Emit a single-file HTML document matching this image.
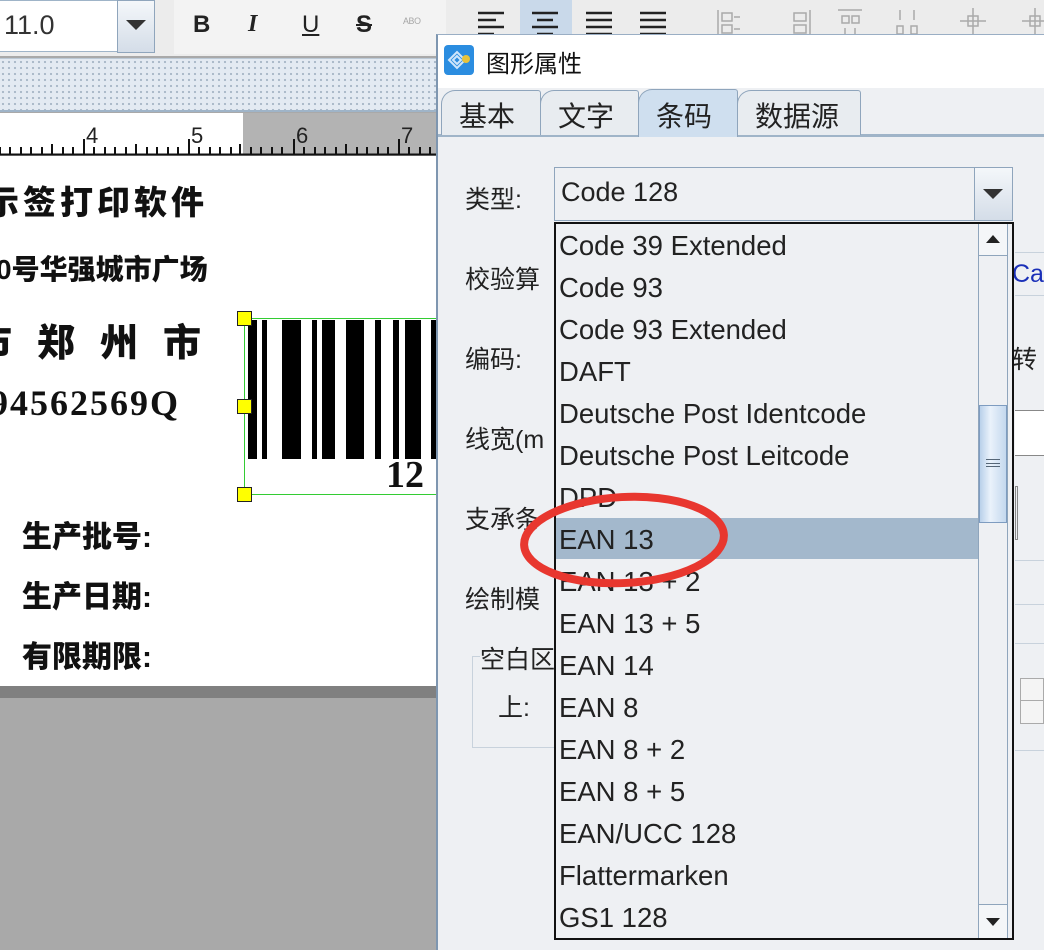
<!DOCTYPE html>
<html><head><meta charset="utf-8"><style>
*{margin:0;padding:0;box-sizing:border-box}
body{width:1044px;height:950px;overflow:hidden;position:relative;background:#a9a9a9;font-family:"Liberation Sans","Noto Sans CJK SC",sans-serif}
.a{position:absolute}
.cj{font-family:"Liberation Sans","Noto Sans CJK SC",sans-serif}
.item{position:absolute;left:559px;font-size:27.5px;color:#222;white-space:nowrap;line-height:42px;height:42px}
.lbl{position:absolute;left:465px;font-size:25px;color:#222}
</style></head><body>
<!-- toolbar -->
<div class="a" style="left:0;top:0;width:1044px;height:56px;background:#ececec"></div>
<div class="a" style="left:0;top:0;width:118px;height:52px;background:#fff;border:1px solid #9fb4c8;border-left:none"></div>
<div class="a" style="left:4px;top:10px;font-size:27px;color:#333">11.0</div>
<div class="a" style="left:117px;top:0;width:38px;height:53px;background:linear-gradient(#f4f7fa,#d4dde8);border:1px solid #8fa5bc"></div>
<div class="a" style="left:126px;top:20px;width:0;height:0;border-left:10px solid transparent;border-right:10px solid transparent;border-top:10px solid #333"></div>
<div class="a" style="left:174px;top:0;width:272px;height:54px;background:#f3f3f3"></div>
<div class="a" style="left:193px;top:11px;font-size:24px;font-weight:bold;color:#222">B</div>
<div class="a" style="left:248px;top:11px;font-size:24px;font-style:italic;font-weight:bold;font-family:'Liberation Serif',serif;color:#222">I</div>
<div class="a" style="left:302px;top:11px;font-size:24px;text-decoration:underline;color:#222">U</div>
<div class="a" style="left:356px;top:11px;font-size:24px;text-decoration:line-through;font-weight:bold;color:#222">S</div>
<div class="a" style="left:403px;top:15px;font-size:13px;color:#aaa">ᴬᴮᴼ</div>
<div class="a" style="left:520px;top:0;width:52px;height:40px;background:#c9d9ea"></div>
<svg class="a" style="left:470px;top:8px" width="200" height="30"><g stroke="#222" stroke-width="2.5">
<path d="M8 5h26M8 12h18M8 19h26M8 26h16"/><path d="M62 5h26M67 12h16M62 19h26M67 26h16"/><path d="M116 5h26M116 12h26M116 19h26M116 26h26"/><path d="M170 5h26M170 12h26M170 19h26M170 26h26"/></g></svg>
<svg class="a" style="left:710px;top:8px" width="334" height="30"><g stroke="#aaa" stroke-width="1.5" fill="none">
<path d="M8 2v26M12 5h10v8H12zM12 17h10v8H12zM30 9h-6M30 21h-6"/><path d="M100 2v26M84 5h12v8H84zM84 17h12v8H84z"/><path d="M128 2h24M132 8h7v7h-7zM142 8h7v7h-7zM135 20v8M145 20v8"/><path d="M190 2v10M204 2v10M187 18h6v8h-6zM201 18h6v8h-6z"/><path d="M258 8h10v10h-10zM263 0v28M250 13h26"/><path d="M320 8h10v10h-10zM312 13h26M325 0v28"/></g></svg>
<!-- dotted strip -->
<div class="a" style="left:0;top:58px;width:440px;height:54px;background-color:#e3eaf2;background-image:radial-gradient(#a9b8c8 1px,transparent 1.3px);background-size:6px 6px;border-top:1px solid #bcc9d6;border-bottom:2px solid #9fb4c8"></div>
<!-- ruler -->
<div class="a" style="left:0;top:113px;width:243px;height:42px;background:#fff"></div>
<div class="a" style="left:243px;top:113px;width:197px;height:42px;background:#b3b3b3"></div>
<svg class="a" style="left:0;top:113px" width="440" height="43">
<path d="M0 41.5H440" stroke="#111" stroke-width="2"/>
<g stroke="#111" stroke-width="2">
<path d="M0 41v-7M10 41v-7M21 41v-7M31 41v-7M42 41v-7M52 41v-10M63 41v-7M73 41v-7M84 41v-15M94 41v-7M105 41v-7M115 41v-7M126 41v-7M136 41v-10M147 41v-7M157 41v-7M168 41v-7M178 41v-7M189 41v-15M199 41v-7M210 41v-7M220 41v-7M231 41v-7M240 41v-10M251 41v-7M261 41v-7M272 41v-7M282 41v-7M294 41v-15M304 41v-7M315 41v-7M325 41v-7M336 41v-7M346 41v-10M357 41v-7M367 41v-7M378 41v-7M388 41v-7M399 41v-15M409 41v-7M420 41v-7M430 41v-7"/></g>
<g font-size="22" fill="#222" font-family="Liberation Sans"><text x="86" y="30">4</text><text x="191" y="30">5</text><text x="296" y="30">6</text><text x="401" y="30">7</text></g></svg>
<!-- canvas -->
<div class="a" style="left:0;top:156px;width:440px;height:530px;background:#fff"></div>
<div class="a" style="left:0;top:686px;width:440px;height:12px;background:#808080"></div>
<div class="a cj" style="left:-14px;top:176px;font-size:33px;font-weight:900;letter-spacing:4px;color:#111">示签打印软件</div>
<div class="a cj" style="left:-4px;top:248px;font-size:28px;font-weight:900;color:#111">0号华强城市广场</div>
<div class="a cj" style="left:-26px;top:312px;font-size:38px;font-weight:900;letter-spacing:25px;color:#111">市郑州市</div>
<div class="a" style="left:-10px;top:382px;font-size:36px;font-weight:bold;letter-spacing:2px;font-family:'Liberation Serif',serif;color:#111">94562569Q</div>
<div class="a cj" style="left:22px;top:508px;font-size:30px;font-weight:900;color:#111;line-height:60px">生产批号:<br>生产日期:<br>有限期限:</div>
<!-- barcode -->
<div class="a" style="left:244px;top:318px;width:200px;height:177px;border:1.5px solid #3c3;border-right:none"></div>
<svg class="a" style="left:245px;top:320px" width="195" height="140"><g fill="#000">
<rect x="3" y="0" width="9" height="139"/><rect x="17" y="0" width="5" height="139"/><rect x="37" y="0" width="19" height="139"/><rect x="67" y="0" width="5" height="139"/><rect x="77" y="0" width="13" height="139"/><rect x="101" y="0" width="18" height="139"/><rect x="130" y="0" width="6" height="139"/><rect x="148" y="0" width="6" height="139"/><rect x="160" y="0" width="16" height="139"/><rect x="186" y="0" width="9" height="139"/></g></svg>
<div class="a" style="left:386px;top:456px;font-size:38px;font-weight:bold;font-family:'Liberation Serif',serif;color:#111;line-height:38px">12</div>
<div class="a" style="left:237px;top:311px;width:15px;height:15px;background:#ff0;border:1.5px solid #222"></div>
<div class="a" style="left:237px;top:399px;width:15px;height:15px;background:#ff0;border:1.5px solid #222"></div>
<div class="a" style="left:237px;top:487px;width:15px;height:15px;background:#ff0;border:1.5px solid #222"></div>
<!-- dialog -->
<div class="a" style="left:436px;top:34px;width:608px;height:916px;background:#eef0f3;border-left:2px solid #7e96b0;border-top:1px solid #9aaec4"></div>
<div class="a" style="left:438px;top:35px;width:606px;height:53px;background:#fff"></div>
<svg class="a" style="left:443px;top:44px" width="32" height="32"><rect x="1" y="1" width="30" height="30" rx="4" fill="#2b8de0"/><g fill="none" stroke="#cfe6fb" stroke-width="2"><path d="M6 16l8-8 8 8-8 8z"/><path d="M10 16l4-4 4 4-4 4z"/></g><circle cx="23" cy="15" r="4" fill="#e8c33a"/></svg>
<div class="a cj" style="left:486px;top:44px;font-size:24px;color:#111">图形属性</div>
<!-- tabs -->
<div class="a" style="left:438px;top:134px;width:606px;height:3px;background:#9fb4c8"></div>
<div class="a" style="left:441px;top:90px;width:100px;height:45px;background:#e8ecf0;border:1px solid #8fa5bc;border-bottom:none;border-radius:14px 3px 0 0"></div>
<div class="a" style="left:540px;top:90px;width:99px;height:45px;background:#e8ecf0;border:1px solid #8fa5bc;border-bottom:none;border-radius:14px 3px 0 0"></div>
<div class="a" style="left:638px;top:89px;width:100px;height:48px;background:#cfdfef;border:1px solid #8fa5bc;border-bottom:none;border-radius:14px 3px 0 0"></div>
<div class="a" style="left:737px;top:90px;width:124px;height:45px;background:#e8ecf0;border:1px solid #8fa5bc;border-bottom:none;border-radius:14px 3px 0 0"></div>
<div class="a cj" style="left:459px;top:95px;font-size:28px;color:#222">基本</div>
<div class="a cj" style="left:558px;top:95px;font-size:28px;color:#222">文字</div>
<div class="a cj" style="left:656px;top:95px;font-size:28px;color:#222">条码</div>
<div class="a cj" style="left:755px;top:95px;font-size:28px;color:#222">数据源</div>
<!-- labels -->
<div class="lbl" style="top:180px">类型:</div>
<div class="lbl" style="top:260px">校验算</div>
<div class="lbl" style="top:340px">编码:</div>
<div class="lbl" style="top:420px">线宽(m</div>
<div class="lbl" style="top:500px">支承条</div>
<div class="lbl" style="top:580px">绘制模</div>
<div class="a" style="left:472px;top:656px;width:90px;height:92px;border:1px solid #c8d2dc;border-right:none"></div>
<div class="lbl" style="top:640px;left:480px;background:#eef0f3">空白区</div>
<div class="lbl" style="top:688px;left:498px">上:</div>
<!-- right bits -->
<div class="a" style="left:1012px;top:260px;font-size:25px;color:#1a2fb8">Ca</div>
<div class="a cj" style="left:1012px;top:340px;font-size:25px;color:#222">转</div>
<div class="a" style="left:1015px;top:252px;width:29px;height:1px;background:#c8d2dc"></div>
<div class="a" style="left:1015px;top:295px;width:29px;height:1px;background:#c8d2dc"></div>
<div class="a" style="left:1015px;top:410px;width:29px;height:46px;background:#fff;border-top:1px solid #888;border-bottom:1px solid #888"></div>
<div class="a" style="left:1015px;top:486px;width:3px;height:54px;border:1px solid #888"></div>
<div class="a" style="left:1015px;top:560px;width:29px;height:1px;background:#c8d2dc"></div>
<div class="a" style="left:1015px;top:604px;width:29px;height:1px;background:#c8d2dc"></div>
<div class="a" style="left:1015px;top:643px;width:29px;height:1px;background:#c8d2dc"></div>
<div class="a" style="left:1020px;top:678px;width:24px;height:46px;background:#f4f4f4;border:1px solid #aaa"></div>
<div class="a" style="left:1020px;top:700px;width:24px;height:1px;background:#aaa"></div>
<div class="a" style="left:1015px;top:750px;width:29px;height:1px;background:#c8d2dc"></div>
<!-- combo -->
<div class="a" style="left:554px;top:167px;width:459px;height:54px;background:#eef0f3;border:1px solid #8fa5bc"></div>
<div class="a" style="left:561px;top:177px;font-size:27px;color:#222">Code 128</div>
<div class="a" style="left:974px;top:168px;width:38px;height:52px;background:linear-gradient(#f4f7fa,#d4dde8);border-left:1px solid #8fa5bc"></div>
<div class="a" style="left:983px;top:189px;width:0;height:0;border-left:10px solid transparent;border-right:10px solid transparent;border-top:10px solid #333"></div>
<!-- list -->
<div class="a" style="left:554px;top:222px;width:460px;height:718px;background:#eef0f3;border:2px solid #111"></div>
<div class="a" style="left:556px;top:518px;width:422px;height:41px;background:#a3b8cc"></div>
<div class="item" style="top:225px">Code 39 Extended</div>
<div class="item" style="top:267px">Code 93</div>
<div class="item" style="top:309px">Code 93 Extended</div>
<div class="item" style="top:351px">DAFT</div>
<div class="item" style="top:393px">Deutsche Post Identcode</div>
<div class="item" style="top:435px">Deutsche Post Leitcode</div>
<div class="item" style="top:477px">DPD</div>
<div class="item" style="top:519px">EAN 13</div>
<div class="item" style="top:561px">EAN 13 + 2</div>
<div class="item" style="top:603px">EAN 13 + 5</div>
<div class="item" style="top:645px">EAN 14</div>
<div class="item" style="top:687px">EAN 8</div>
<div class="item" style="top:729px">EAN 8 + 2</div>
<div class="item" style="top:771px">EAN 8 + 5</div>
<div class="item" style="top:813px">EAN/UCC 128</div>
<div class="item" style="top:855px">Flattermarken</div>
<div class="item" style="top:897px">GS1 128</div>
<!-- scrollbar -->
<div class="a" style="left:978px;top:224px;width:30px;height:714px;background:#eef0f3;border-left:1px solid #8fa5bc;border-right:1px solid #8fa5bc"></div>
<div class="a" style="left:979px;top:224px;width:28px;height:32px;background:#f4f6f8;border-bottom:1px solid #8fa5bc"></div>
<div class="a" style="left:986px;top:235px;border-left:7px solid transparent;border-right:7px solid transparent;border-bottom:8px solid #222"></div>
<div class="a" style="left:979px;top:405px;width:28px;height:118px;background:linear-gradient(90deg,#b9d0ea,#eaf2fb 40%,#c4d8ee);border:1px solid #7e9cc0"></div>
<div class="a" style="left:986px;top:459px;width:14px;height:8px;border-top:1px solid #567;border-bottom:1px solid #567"></div>
<div class="a" style="left:986px;top:463px;width:14px;height:1px;background:#567"></div>
<div class="a" style="left:979px;top:904px;width:28px;height:34px;background:#f4f6f8;border-top:1px solid #8fa5bc"></div>
<div class="a" style="left:986px;top:918px;border-left:7px solid transparent;border-right:7px solid transparent;border-top:8px solid #222"></div>
<!-- red ellipse -->
<svg class="a" style="left:515px;top:490px" width="220" height="110"><ellipse cx="109" cy="50" rx="100" ry="43" fill="none" stroke="#e8372f" stroke-width="8" transform="rotate(-3 109 50)"/></svg>
</body></html>
